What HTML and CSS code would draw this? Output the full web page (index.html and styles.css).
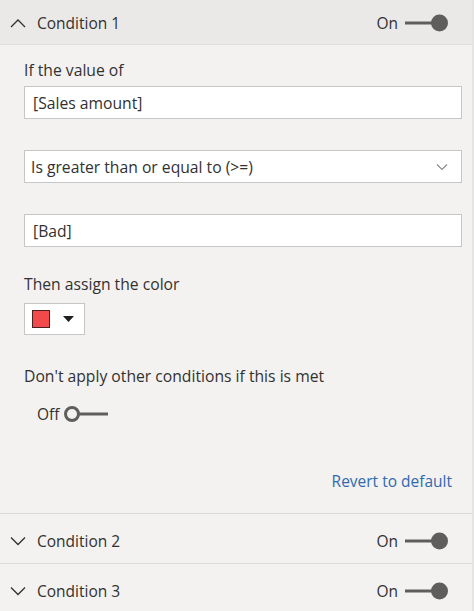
FILE: index.html
```html
<!DOCTYPE html>
<html>
<head>
<meta charset="utf-8">
<link rel="stylesheet" href="styles.css">
</head>
<body>
<div class="panel">
  <section class="cond expanded">
    <div class="cond-head head-open">
      <svg class="chev" width="16" height="10" viewBox="0 0 16 10"><path d="M1 9 L8 2 L15 9" fill="none" stroke="#323130" stroke-width="1.3"/></svg>
      <span class="cond-title">Condition 1</span>
      <span class="toggle on"><span class="tlabel">On</span><svg width="44" height="18" viewBox="0 0 44 18"><line x1="0" y1="9" x2="30" y2="9" stroke="#605e5c" stroke-width="3"/><circle cx="34.5" cy="9" r="8.5" fill="#605e5c"/></svg></span>
    </div>
    <div class="cond-body">
      <div class="label first">If the value of</div>
      <div class="field">[Sales amount]</div>
      <div class="field select">
        <span class="sel-text">Is greater than or equal to (&gt;=)</span>
        <svg width="12" height="8" viewBox="0 0 12 8"><path d="M1 1.5 L6 6.5 L11 1.5" fill="none" stroke="#8a8886" stroke-width="1.1"/></svg>
      </div>
      <div class="field gap-bad">[Bad]</div>
      <div class="label then">Then assign the color</div>
      <div class="picker">
        <span class="swatch"></span>
        <svg width="11" height="6" viewBox="0 0 11 6"><path d="M0 0 L11 0 L5.5 6 Z" fill="#201f1e"/></svg>
      </div>
      <div class="label dont">Don't apply other conditions if this is met</div>
      <div class="toggle off"><span class="tlabel">Off</span><svg width="46" height="18" viewBox="0 0 46 18"><circle cx="9" cy="9" r="6.5" fill="none" stroke="#605e5c" stroke-width="3"/><line x1="15" y1="9" x2="45" y2="9" stroke="#605e5c" stroke-width="3"/></svg></div>
      <div class="revert-row"><a class="revert">Revert to default</a></div>
    </div>
  </section>
  <section class="cond">
    <div class="cond-head head-closed">
      <svg class="chev" width="16" height="10" viewBox="0 0 16 10"><path d="M1 1.5 L8 8.5 L15 1.5" fill="none" stroke="#323130" stroke-width="1.3"/></svg>
      <span class="cond-title">Condition 2</span>
      <span class="toggle on"><span class="tlabel">On</span><svg width="44" height="18" viewBox="0 0 44 18"><line x1="0" y1="9" x2="30" y2="9" stroke="#605e5c" stroke-width="3"/><circle cx="34.5" cy="9" r="8.5" fill="#605e5c"/></svg></span>
    </div>
  </section>
  <section class="cond">
    <div class="cond-head head-closed">
      <svg class="chev" width="16" height="10" viewBox="0 0 16 10"><path d="M1 1.5 L8 8.5 L15 1.5" fill="none" stroke="#323130" stroke-width="1.3"/></svg>
      <span class="cond-title">Condition 3</span>
      <span class="toggle on"><span class="tlabel">On</span><svg width="44" height="18" viewBox="0 0 44 18"><line x1="0" y1="9" x2="30" y2="9" stroke="#605e5c" stroke-width="3"/><circle cx="34.5" cy="9" r="8.5" fill="#605e5c"/></svg></span>
    </div>
  </section>
</div>
</body>
</html>
```

FILE: styles.css
```css
html, body {
  margin: 0;
  padding: 0;
  background: #f3f2f1;
}
body {
  font-family: "Open Sans", "Noto Sans", sans-serif;
  font-size: 15.7px;
  color: #323130;
}
.panel {
  width: 474px;
  height: 611px;
  box-sizing: border-box;
  border-right: 2px solid #e6e4e2;
  overflow: hidden;
}
.cond {
  border-bottom: 1px solid #dcdad8;
}
.cond-head {
  display: flex;
  align-items: center;
  height: 49px;
  padding: 1px 23px 0 10px;
  box-sizing: border-box;
}
.head-closed {
  padding-top: 5px;
}
.head-open {
  height: 45px;
  background: #ebe9e8;
  border-bottom: 1px solid #e1dfdd;
}
.chev {
  flex: none;
}
.cond-title {
  margin-left: 11px;
  font-size: 15.5px;
  flex: 1;
}
.toggle {
  display: flex;
  align-items: center;
}
.toggle .tlabel {
  font-size: 15.5px;
  margin-right: 7px;
}
.cond-body {
  padding: 15px 10px 22px 24px;
}
.label {
  line-height: 20px;
}
.field {
  display: flex;
  align-items: center;
  height: 33px;
  box-sizing: border-box;
  background: #fff;
  border: 1px solid #c8c6c4;
  padding: 0 8px;
  margin-top: 6px;
}
.field.select {
  margin-top: 31px;
  padding: 0 13px 0 6px;
  justify-content: space-between;
}
.field.gap-bad {
  margin-top: 31px;
}
.label.then {
  margin-top: 27px;
}
.picker {
  display: flex;
  align-items: center;
  width: 61px;
  height: 32px;
  box-sizing: border-box;
  background: #fff;
  border: 1px solid #c8c6c4;
  margin-top: 9px;
  padding-left: 7px;
}
.swatch {
  width: 16px;
  height: 16px;
  background: #f24a4a;
  border: 1px solid #4a2222;
  margin-right: 13px;
}
.label.dont {
  margin-top: 31px;
}
.toggle.off {
  margin-top: 18px;
  margin-left: 13px;
  height: 20px;
}
.toggle.off .tlabel {
  margin-right: 3px;
}
.revert-row {
  display: flex;
  justify-content: flex-end;
  margin-top: 47px;
  padding-right: 10px;
}
.revert {
  color: #2f6aac;
  font-size: 15.5px;
  line-height: 20px;
}
```
